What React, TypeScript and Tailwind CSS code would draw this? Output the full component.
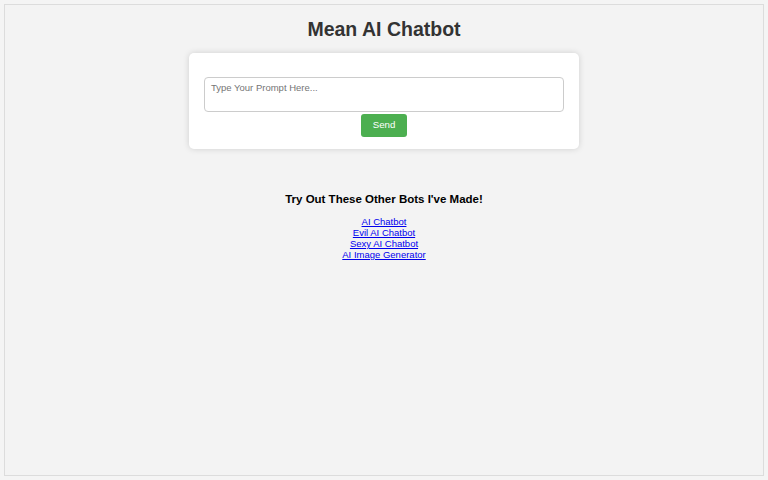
import React from "react";

export default function App() {
  return (
    <div className="w-full h-[480px] p-[4px] bg-[#f4f4f4]" style={{ fontFamily: '"Liberation Sans", Arial, sans-serif' }}>
      <div className="h-full border border-[#dcdcdc] bg-[#f3f3f3] flex flex-col items-center">
        <h1 className="mt-[12px] text-[19.5px] leading-[24px] font-bold text-[#333]">Mean AI Chatbot</h1>
        <div className="mt-[12px] w-[390px] bg-white rounded-[5px] shadow-[0_0_6px_rgba(0,0,0,0.15)] px-[15px] pt-[24px] pb-[12px] flex flex-col items-center">
          <textarea
            placeholder="Type Your Prompt Here..."
            className="w-[360px] h-[35px] border border-[#ccc] rounded-[4px] px-[6px] py-[3px] text-[9.5px] leading-[13px] resize-none outline-none placeholder:text-[#757575]"
          />
          <button className="mt-[2px] w-[46px] h-[23px] bg-[#4caf50] text-white text-[9.7px] rounded-[3px]">Send</button>
        </div>
        <h2 className="mt-[42px] text-[11.5px] leading-[16px] font-bold text-black">Try Out These Other Bots I've Made!</h2>
        <div className="mt-[9px] flex flex-col items-center text-[9.5px] leading-[11px]">
          <a href="#" className="text-[#0000ee] underline">AI Chatbot</a>
          <a href="#" className="text-[#0000ee] underline">Evil AI Chatbot</a>
          <a href="#" className="text-[#0000ee] underline">Sexy AI Chatbot</a>
          <a href="#" className="text-[#0000ee] underline">AI Image Generator</a>
        </div>
      </div>
    </div>
  );
}
